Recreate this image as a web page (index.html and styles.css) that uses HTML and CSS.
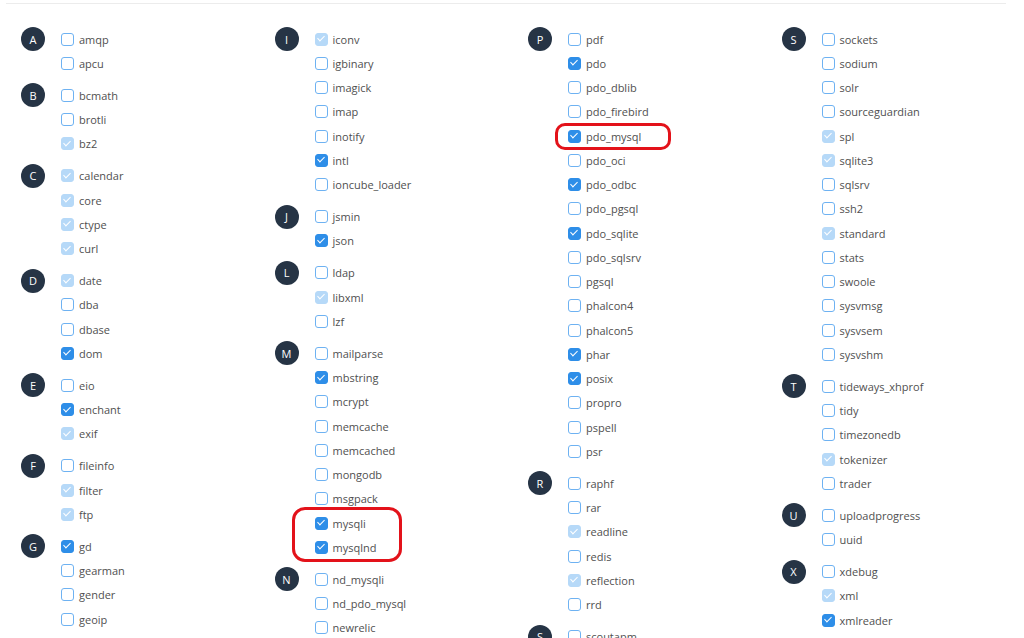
FILE: index.html
```html
<!DOCTYPE html>
<html>
<head>
<meta charset="utf-8">
<link rel="stylesheet" href="styles.css">
</head>
<body>
<div class="topline"></div>
<div class="grid">
  <div class="col">
    <div class="group"><span class="badge">A</span><ul class="items">
      <li><span class="cb"></span>amqp</li>
      <li><span class="cb"></span>apcu</li>
    </ul></div>
    <div class="group"><span class="badge">B</span><ul class="items">
      <li><span class="cb"></span>bcmath</li>
      <li><span class="cb"></span>brotli</li>
      <li><span class="cb dis"></span>bz2</li>
    </ul></div>
    <div class="group"><span class="badge">C</span><ul class="items">
      <li><span class="cb dis"></span>calendar</li>
      <li><span class="cb dis"></span>core</li>
      <li><span class="cb dis"></span>ctype</li>
      <li><span class="cb dis"></span>curl</li>
    </ul></div>
    <div class="group"><span class="badge">D</span><ul class="items">
      <li><span class="cb dis"></span>date</li>
      <li><span class="cb"></span>dba</li>
      <li><span class="cb"></span>dbase</li>
      <li><span class="cb on"></span>dom</li>
    </ul></div>
    <div class="group"><span class="badge">E</span><ul class="items">
      <li><span class="cb"></span>eio</li>
      <li><span class="cb on"></span>enchant</li>
      <li><span class="cb dis"></span>exif</li>
    </ul></div>
    <div class="group"><span class="badge">F</span><ul class="items">
      <li><span class="cb"></span>fileinfo</li>
      <li><span class="cb dis"></span>filter</li>
      <li><span class="cb dis"></span>ftp</li>
    </ul></div>
    <div class="group"><span class="badge">G</span><ul class="items">
      <li><span class="cb on"></span>gd</li>
      <li><span class="cb"></span>gearman</li>
      <li><span class="cb"></span>gender</li>
      <li><span class="cb"></span>geoip</li>
    </ul></div>
  </div>
  <div class="col">
    <div class="group"><span class="badge">I</span><ul class="items">
      <li><span class="cb dis"></span>iconv</li>
      <li><span class="cb"></span>igbinary</li>
      <li><span class="cb"></span>imagick</li>
      <li><span class="cb"></span>imap</li>
      <li><span class="cb"></span>inotify</li>
      <li><span class="cb on"></span>intl</li>
      <li><span class="cb"></span>ioncube_loader</li>
    </ul></div>
    <div class="group"><span class="badge">J</span><ul class="items">
      <li><span class="cb"></span>jsmin</li>
      <li><span class="cb on"></span>json</li>
    </ul></div>
    <div class="group"><span class="badge">L</span><ul class="items">
      <li><span class="cb"></span>ldap</li>
      <li><span class="cb dis"></span>libxml</li>
      <li><span class="cb"></span>lzf</li>
    </ul></div>
    <div class="group"><span class="badge">M</span><ul class="items">
      <li><span class="cb"></span>mailparse</li>
      <li><span class="cb on"></span>mbstring</li>
      <li><span class="cb"></span>mcrypt</li>
      <li><span class="cb"></span>memcache</li>
      <li><span class="cb"></span>memcached</li>
      <li><span class="cb"></span>mongodb</li>
      <li><span class="cb"></span>msgpack</li>
      <li><span class="cb on"></span>mysqli</li>
      <li><span class="cb on"></span>mysqlnd</li>
    </ul></div>
    <div class="group"><span class="badge">N</span><ul class="items">
      <li><span class="cb"></span>nd_mysqli</li>
      <li><span class="cb"></span>nd_pdo_mysql</li>
      <li><span class="cb"></span>newrelic</li>
    </ul></div>
  </div>
  <div class="col">
    <div class="group"><span class="badge">P</span><ul class="items">
      <li><span class="cb"></span>pdf</li>
      <li><span class="cb on"></span>pdo</li>
      <li><span class="cb"></span>pdo_dblib</li>
      <li><span class="cb"></span>pdo_firebird</li>
      <li><span class="cb on"></span>pdo_mysql</li>
      <li><span class="cb"></span>pdo_oci</li>
      <li><span class="cb on"></span>pdo_odbc</li>
      <li><span class="cb"></span>pdo_pgsql</li>
      <li><span class="cb on"></span>pdo_sqlite</li>
      <li><span class="cb"></span>pdo_sqlsrv</li>
      <li><span class="cb"></span>pgsql</li>
      <li><span class="cb"></span>phalcon4</li>
      <li><span class="cb"></span>phalcon5</li>
      <li><span class="cb on"></span>phar</li>
      <li><span class="cb on"></span>posix</li>
      <li><span class="cb"></span>propro</li>
      <li><span class="cb"></span>pspell</li>
      <li><span class="cb"></span>psr</li>
    </ul></div>
    <div class="group"><span class="badge">R</span><ul class="items">
      <li><span class="cb"></span>raphf</li>
      <li><span class="cb"></span>rar</li>
      <li><span class="cb dis"></span>readline</li>
      <li><span class="cb"></span>redis</li>
      <li><span class="cb dis"></span>reflection</li>
      <li><span class="cb"></span>rrd</li>
    </ul></div>
    <div class="group"><span class="badge">S</span><ul class="items">
      <li><span class="cb"></span>scoutapm</li>
    </ul></div>
  </div>
  <div class="col">
    <div class="group"><span class="badge">S</span><ul class="items">
      <li><span class="cb"></span>sockets</li>
      <li><span class="cb"></span>sodium</li>
      <li><span class="cb"></span>solr</li>
      <li><span class="cb"></span>sourceguardian</li>
      <li><span class="cb dis"></span>spl</li>
      <li><span class="cb dis"></span>sqlite3</li>
      <li><span class="cb"></span>sqlsrv</li>
      <li><span class="cb"></span>ssh2</li>
      <li><span class="cb dis"></span>standard</li>
      <li><span class="cb"></span>stats</li>
      <li><span class="cb"></span>swoole</li>
      <li><span class="cb"></span>sysvmsg</li>
      <li><span class="cb"></span>sysvsem</li>
      <li><span class="cb"></span>sysvshm</li>
    </ul></div>
    <div class="group"><span class="badge">T</span><ul class="items">
      <li><span class="cb"></span>tideways_xhprof</li>
      <li><span class="cb"></span>tidy</li>
      <li><span class="cb"></span>timezonedb</li>
      <li><span class="cb dis"></span>tokenizer</li>
      <li><span class="cb"></span>trader</li>
    </ul></div>
    <div class="group"><span class="badge">U</span><ul class="items">
      <li><span class="cb"></span>uploadprogress</li>
      <li><span class="cb"></span>uuid</li>
    </ul></div>
    <div class="group"><span class="badge">X</span><ul class="items">
      <li><span class="cb"></span>xdebug</li>
      <li><span class="cb dis"></span>xml</li>
      <li><span class="cb on"></span>xmlreader</li>
    </ul></div>
  </div>
</div>
<div class="mark mark-pdo"></div>
<div class="mark mark-mysqli"></div>
</body>
</html>
```

FILE: styles.css
```css
html, body {
  margin: 0;
  padding: 0;
  background: #fff;
  overflow: hidden;
}
body {
  position: relative;
  font-family: "Open Sans", "Noto Sans", sans-serif;
  font-size: 11px;
  color: #505050;
  height: 638px;
}
.topline {
  height: 0;
  border-top: 1px solid #ececec;
  margin: 3px 18px 0 6px;
}
.grid {
  display: grid;
  grid-template-columns: repeat(4, 253.5px);
  padding-left: 21px;
  margin-top: 23px;
}
.group {
  display: flex;
  align-items: flex-start;
  margin-bottom: 7.75px;
}
.badge {
  flex: none;
  width: 24px;
  height: 24px;
  border-radius: 50%;
  background: #263445;
  color: #fff;
  font-size: 11px;
  display: flex;
  align-items: center;
  justify-content: center;
  margin-right: 16px;
}
.items {
  list-style: none;
  margin: 0;
  padding: 0;
}
.items li {
  height: 24.25px;
  display: flex;
  align-items: center;
  white-space: nowrap;
}
.cb {
  position: relative;
  flex: none;
  box-sizing: border-box;
  width: 13px;
  height: 13px;
  border: 1.5px solid #6eb2f2;
  border-radius: 3px;
  margin-right: 5px;
  background: #fff;
}
.cb.on {
  background: #2e8ee8;
  border-color: #2e8ee8;
}
.cb.dis {
  background: #b6d9f8;
  border-color: #b6d9f8;
}
.cb.on::after,
.cb.dis::after {
  content: "";
  position: absolute;
  left: 3px;
  top: 0.5px;
  width: 3px;
  height: 6px;
  border-right: 1.5px solid #fff;
  border-bottom: 1.5px solid #fff;
  transform: rotate(45deg);
}
.mark {
  position: absolute;
  box-sizing: border-box;
  border: 3px solid #e3121a;
}
.mark-pdo {
  left: 555px;
  top: 123px;
  width: 116px;
  height: 27px;
  border-radius: 10px;
}
.mark-mysqli {
  left: 292px;
  top: 507px;
  width: 110px;
  height: 55px;
  border-radius: 13px;
}
```
